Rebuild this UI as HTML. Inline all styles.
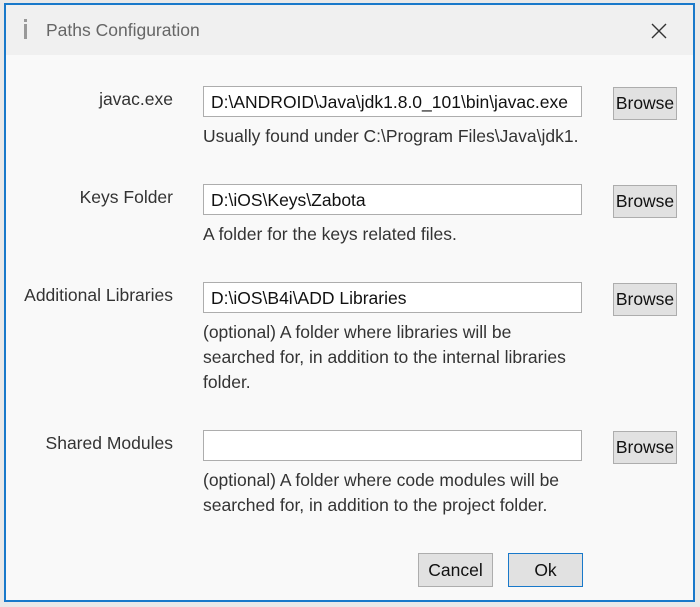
<!DOCTYPE html>
<html><head><style>
body{margin:0;width:700px;height:607px;background:#e9e9e9;font-family:"Liberation Sans",sans-serif;color:#222;position:relative;overflow:hidden}
.win{position:absolute;left:4px;top:3px;width:687px;height:595px;border:2px solid #1979ca;background:#f9f9f9}
.tb{position:absolute;left:0;top:0;right:0;height:50px;background:#f0f0f0}
.t{position:absolute;font-size:17.5px;white-space:nowrap;color:#333}
.lbl{position:absolute;right:520px;font-size:17.5px;color:#333;white-space:nowrap}
.in{position:absolute;left:197px;height:31px;background:#fff;border:1px solid #adadad;font-size:17.5px;line-height:31px;padding-left:7px;box-sizing:border-box;width:379px;color:#111;white-space:nowrap;overflow:hidden}
.b{position:absolute;box-sizing:border-box;background:#e1e1e1;border:1px solid #adadad;font-size:17.5px;text-align:center;color:#111}
.br{left:607px;width:64px;height:33px;line-height:31px}
.d{position:absolute;left:197px;font-size:17.5px;color:#333;line-height:25px;white-space:nowrap}
</style></head><body>
<div class="win">
<div class="tb">
<div style="position:absolute;left:18px;top:19px;width:3px;height:15px;background:#999"></div>
<div style="position:absolute;left:18px;top:14px;width:3px;height:3px;background:#999"></div>
<div class="t" style="left:40px;top:15px;color:#666;font-size:17.5px">Paths Configuration</div>
<svg style="position:absolute;left:645px;top:18px" width="16" height="16"><path d="M1 1L15 15M15 1L1 15" stroke="#333" stroke-width="1.4"/></svg>
</div>
<div class="lbl" style="top:84px">javac.exe</div>
<div class="in" style="top:81px">D:\ANDROID\Java\jdk1.8.0_101\bin\javac.exe</div>
<div class="b br" style="top:82px">Browse</div>
<div class="d" style="top:119px">Usually found under C:\Program Files\Java\jdk1.</div>
<div class="lbl" style="top:182px">Keys Folder</div>
<div class="in" style="top:179px">D:\iOS\Keys\Zabota</div>
<div class="b br" style="top:180px">Browse</div>
<div class="d" style="top:217px">A folder for the keys related files.</div>
<div class="lbl" style="top:280px">Additional Libraries</div>
<div class="in" style="top:277px">D:\iOS\B4i\ADD Libraries</div>
<div class="b br" style="top:278px">Browse</div>
<div class="d" style="top:315px">(optional) A folder where libraries will be<br>searched for, in addition to the internal libraries<br>folder.</div>
<div class="lbl" style="top:428px">Shared Modules</div>
<div class="in" style="top:425px"></div>
<div class="b br" style="top:426px">Browse</div>
<div class="d" style="top:463px">(optional) A folder where code modules will be<br>searched for, in addition to the project folder.</div>
<div class="b" style="left:412px;top:548px;width:75px;height:34px;line-height:32px">Cancel</div>
<div class="b" style="left:502px;top:548px;width:75px;height:34px;line-height:32px;border-color:#1979ca">Ok</div>
</div>
</body></html>
